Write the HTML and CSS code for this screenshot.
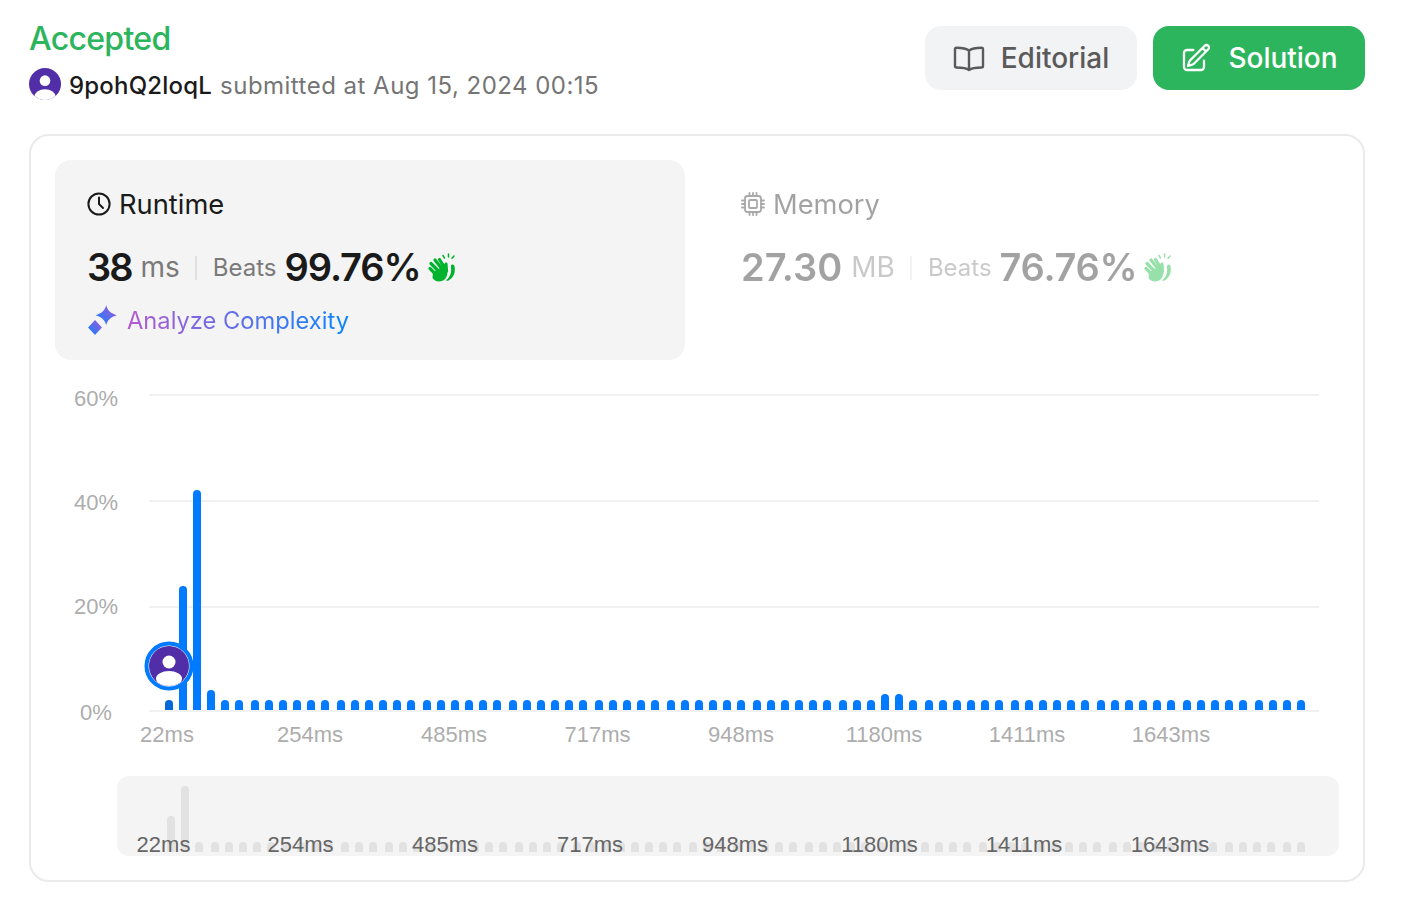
FILE: index.html
```html
<!DOCTYPE html>
<html lang="en">
<head>
<meta charset="utf-8">
<title>Submission</title>
<link rel="stylesheet" href="styles.css">
</head>
<body>
<svg class="defs" width="0" height="0" aria-hidden="true">
  <defs>
    <symbol id="clap" viewBox="0 0 30 30">
      <g class="clap-fingers">
        <path d="M3 15.500l6.500 6.500M4 10.500l8.500 8.500M8 7l7.500 9.500M12.500 6.500l5 8M19 11l.5 7"/>
      </g>
      <path class="clap-fill" d="M6 19l11-6 3.500 5c.2 6.500-3.500 10.500-8.500 10.500-3 0-5-1.500-6.500-3.500z"/>
      <path class="clap-fill" d="M25.500 11.500c1.500 0 2 1 2.200 2.500.6 5.500-.8 10.500-6.200 13.500-1 .5-2.500.3-2.500-.2 4.500-3.500 5.500-7.500 5-12.500-.1-1.500-.2-3.300 1.500-3.300z"/>
      <g class="clap-ticks">
        <path d="M17.500 5 16 2.500"/><path d="M21.500 4V1"/><path d="M25 5.300l2-2.300"/>
      </g>
    </symbol>
    <linearGradient id="spark" x1="0" y1="1" x2="1" y2="0">
      <stop offset="0" stop-color="#0a84ff"/>
      <stop offset="1" stop-color="#a855d8"/>
    </linearGradient>
    <clipPath id="main-clip"><rect x="149" y="380" width="1170" height="330"/></clipPath>
    <clipPath id="mini-clip"><rect x="117" y="776" width="1222" height="76"/></clipPath>
    <clipPath id="avatar-clip"><circle cx="12" cy="12" r="12"/></clipPath>
  </defs>
</svg>
<main class="page">
  <header class="top">
    <div class="status">
      <h1 class="accepted">Accepted</h1>
      <div class="byline">
        <svg class="avatar" viewBox="0 0 24 24"><g clip-path="url(#avatar-clip)"><rect class="av-bg" width="24" height="24"/><circle class="av-fg" cx="12" cy="9.500" r="4"/><ellipse class="av-fg" cx="12" cy="21.500" rx="8" ry="5.500"/></g></svg>
        <span class="user">9pohQ2loqL</span>
        <span class="when">submitted at Aug 15, 2024 00:15</span>
      </div>
    </div>
    <div class="actions">
      <button class="btn btn-grey">
        <svg class="btn-icon" viewBox="0 0 32 32"><path d="M16 8.500C13.500 6.500 9.500 5.700 3.500 5.700c-1 0-1.500.5-1.500 1.400v17c0 .9.500 1.400 1.500 1.400 6 0 10 .6 12.500 2.500 2.500-1.900 6.500-2.500 12.500-2.500 1 0 1.500-.5 1.500-1.400v-17c0-.9-.5-1.400-1.500-1.400-6 0-10 .8-12.500 2.800zm0 0v19.500"/></svg>
        <span>Editorial</span>
      </button>
      <button class="btn btn-green">
        <svg class="btn-icon" viewBox="0 0 24 24"><path d="M16.862 4.487l1.687-1.688a1.875 1.875 0 112.652 2.652L10.582 16.070a4.500 4.500 0 01-1.897 1.130L6 18l.8-2.685a4.500 4.500 0 011.130-1.897l8.932-8.931zm0 0L19.500 7.125M18 14v4.750A2.250 2.250 0 0115.750 21H5.250A2.250 2.250 0 013 18.750V8.250A2.250 2.250 0 015.250 6H10"/></svg>
        <span>Solution</span>
      </button>
    </div>
  </header>

  <section class="card">
    <div class="panels">
      <div class="panel panel-on">
        <div class="panel-title">
          <svg class="title-icon" viewBox="0 0 24 24"><circle cx="12" cy="12" r="10.600"/><path d="M12 5.500V12l4 4"/></svg>
          <span>Runtime</span>
        </div>
        <div class="metric">
          <span class="num num-tight">38</span><span class="unit">ms</span>
          <span class="sep"></span>
          <span class="beats">Beats</span><span class="pct pct-tight">99.76%</span>
          <svg class="clap"><use href="#clap"/></svg>
        </div>
        <div class="analyze">
          <svg class="spark" viewBox="0 0 30 28"><path d="M18 0c1 5 4.500 8 10 9.500-5.500 1.500-9 4.500-10 9.500-1-5-4.500-8-10-9.500C13.500 8 17 5 18 0z"/><path d="M7.500 14l6.500 7-6.500 7-6.500-7z"/></svg>
          <span class="analyze-text">Analyze Complexity</span>
        </div>
      </div>
      <div class="panel panel-off">
        <div class="panel-title">
          <svg class="title-icon chip" viewBox="0 0 24 24"><rect x="4" y="4" width="16" height="16" rx="2.500"/><rect x="8" y="8" width="8" height="8" rx="1"/><path d="M8.500 1v3M12 1v3M15.500 1v3M8.500 20v3M12 20v3M15.500 20v3M1 8.500h3M1 12h3M1 15.500h3M20 8.500h3M20 12h3M20 15.500h3"/></svg>
          <span>Memory</span>
        </div>
        <div class="metric">
          <span class="num">27.30</span><span class="unit">MB</span>
          <span class="sep"></span>
          <span class="beats">Beats</span><span class="pct">76.76%</span>
          <svg class="clap"><use href="#clap"/></svg>
        </div>
      </div>
    </div>

    <svg class="chart" viewBox="55 360 1284 496" width="1284" height="496">
      <g class="grid">
        <line x1="149" x2="1319" y1="395" y2="395"/>
        <line x1="149" x2="1319" y1="501" y2="501"/>
        <line x1="149" x2="1319" y1="607" y2="607"/>
        <line x1="149" x2="1319" y1="711" y2="711"/>
      </g>
      <g class="ylabels">
        <text x="96" y="406">60%</text>
        <text x="96" y="510">40%</text>
        <text x="96" y="614">20%</text>
        <text x="96" y="720">0%</text>
      </g>
      <g class="bars" clip-path="url(#main-clip)">
        <rect class="dark" x="165" y="700"/><rect class="tall" x="179" y="586"/><rect class="tall" x="193" y="490"/><rect class="mid" x="207" y="690"/>
        <rect x="221" y="700"/><rect x="235" y="700"/><rect x="251" y="700"/><rect x="265" y="700"/><rect x="279" y="700"/><rect x="293" y="700"/><rect x="307" y="700"/><rect x="321" y="700"/>
        <rect x="337" y="700"/><rect x="351" y="700"/><rect x="365" y="700"/><rect x="379" y="700"/><rect x="393" y="700"/><rect x="407" y="700"/>
        <rect x="423" y="700"/><rect x="437" y="700"/><rect x="451" y="700"/><rect x="465" y="700"/><rect x="479" y="700"/><rect x="493" y="700"/>
        <rect x="509" y="700"/><rect x="523" y="700"/><rect x="537" y="700"/><rect x="551" y="700"/><rect x="565" y="700"/><rect x="579" y="700"/>
        <rect x="595" y="700"/><rect x="609" y="700"/><rect x="623" y="700"/><rect x="637" y="700"/><rect x="651" y="700"/>
        <rect x="667" y="700"/><rect x="681" y="700"/><rect x="695" y="700"/><rect x="709" y="700"/><rect x="723" y="700"/><rect x="737" y="700"/>
        <rect x="753" y="700"/><rect x="767" y="700"/><rect x="781" y="700"/><rect x="795" y="700"/><rect x="809" y="700"/><rect x="823" y="700"/>
        <rect x="839" y="700"/><rect x="853" y="700"/><rect x="867" y="700"/><rect class="mid" x="881" y="694"/><rect class="mid" x="895" y="694"/><rect x="909" y="700"/>
        <rect x="925" y="700"/><rect x="939" y="700"/><rect x="953" y="700"/><rect x="967" y="700"/><rect x="981" y="700"/><rect x="995" y="700"/>
        <rect x="1011" y="700"/><rect x="1025" y="700"/><rect x="1039" y="700"/><rect x="1053" y="700"/><rect x="1067" y="700"/><rect x="1081" y="700"/>
        <rect x="1097" y="700"/><rect x="1111" y="700"/><rect x="1125" y="700"/><rect x="1139" y="700"/><rect x="1153" y="700"/><rect x="1167" y="700"/>
        <rect x="1183" y="700"/><rect x="1197" y="700"/><rect x="1211" y="700"/><rect x="1225" y="700"/><rect x="1239" y="700"/>
        <rect x="1255" y="700"/><rect x="1269" y="700"/><rect x="1283" y="700"/><rect x="1297" y="700"/>
      </g>
      <g class="marker">
        <circle class="ring" cx="169" cy="666" r="22.500"/>
        <circle class="ring-bg" cx="169" cy="666" r="20"/>
        <circle class="av-fg" cx="169" cy="662" r="6.500"/>
        <ellipse class="av-fg" cx="169" cy="678.500" rx="13" ry="7.500"/>
      </g>
      <g class="xlabels">
        <text x="167" y="742">22ms</text>
        <text x="310" y="742">254ms</text>
        <text x="454" y="742">485ms</text>
        <text x="597.500" y="742">717ms</text>
        <text x="741" y="742">948ms</text>
        <text x="884" y="742">1180ms</text>
        <text x="1027" y="742">1411ms</text>
        <text x="1171" y="742">1643ms</text>
      </g>
      <rect class="mini-bg" x="117" y="776" width="1222" height="80" rx="12"/>
      <g class="mini" clip-path="url(#mini-clip)">
        <rect class="tall" x="167" y="816"/><rect class="tall" x="181" y="786"/><rect x="195" y="842"/><rect x="211" y="842"/><rect x="225" y="842"/><rect x="239" y="842"/><rect x="253" y="842"/>
        <rect x="267" y="842"/><rect x="281" y="842"/><rect x="297" y="842"/><rect x="311" y="842"/><rect x="325" y="842"/><rect x="341" y="842"/><rect x="355" y="842"/><rect x="369" y="842"/><rect x="385" y="842"/><rect x="399" y="842"/>
        <rect x="413" y="842"/><rect x="427" y="842"/><rect x="441" y="842"/><rect x="457" y="842"/><rect x="471" y="842"/><rect x="485" y="842"/><rect x="499" y="842"/><rect x="515" y="842"/><rect x="529" y="842"/><rect x="543" y="842"/>
        <rect x="557" y="842"/><rect x="573" y="842"/><rect x="587" y="842"/><rect x="601" y="842"/><rect x="617" y="842"/><rect x="631" y="842"/><rect x="645" y="842"/><rect x="659" y="842"/><rect x="673" y="842"/><rect x="689" y="842"/>
        <rect x="703" y="842"/><rect x="717" y="842"/><rect x="733" y="842"/><rect x="747" y="842"/><rect x="761" y="842"/><rect x="775" y="842"/><rect x="789" y="842"/><rect x="805" y="842"/><rect x="819" y="842"/><rect x="833" y="842"/>
        <rect x="847" y="842"/><rect x="861" y="842"/><rect x="877" y="842"/><rect x="891" y="842"/><rect x="905" y="842"/><rect x="921" y="842"/><rect x="935" y="842"/><rect x="949" y="842"/><rect x="963" y="842"/><rect x="979" y="842"/>
        <rect x="993" y="842"/><rect x="1007" y="842"/><rect x="1021" y="842"/><rect x="1037" y="842"/><rect x="1051" y="842"/><rect x="1065" y="842"/><rect x="1079" y="842"/><rect x="1093" y="842"/><rect x="1109" y="842"/><rect x="1123" y="842"/>
        <rect x="1137" y="842"/><rect x="1153" y="842"/><rect x="1167" y="842"/><rect x="1181" y="842"/><rect x="1195" y="842"/><rect x="1209" y="842"/><rect x="1225" y="842"/><rect x="1239" y="842"/><rect x="1253" y="842"/><rect x="1267" y="842"/><rect x="1283" y="842"/><rect x="1297" y="842"/>
      </g>
      <g class="minilabels">
        <text x="163.500" y="852">22ms</text>
        <text x="300.500" y="852">254ms</text>
        <text x="445" y="852">485ms</text>
        <text x="590" y="852">717ms</text>
        <text x="735" y="852">948ms</text>
        <text x="879.500" y="852">1180ms</text>
        <text x="1024" y="852">1411ms</text>
        <text x="1170" y="852">1643ms</text>
      </g>
    </svg>
  </section>
</main>
</body>
</html>
```

FILE: styles.css
```css
* { box-sizing: border-box; }
html, body { margin: 0; background: #fff; }
body { font-family: Inter, "Liberation Sans", sans-serif; color: #1a1a1a; }
.defs { position: absolute; }

.page { width: 1410px; padding: 0 45px 0 29px; }

.top { display: flex; justify-content: space-between; align-items: flex-start; height: 134px; }
.status { display: flex; flex-direction: column; padding-top: 20px; }
.accepted { margin: 0; font-size: 32px; line-height: 38px; font-weight: 500; letter-spacing: -0.7px; color: #2db55d; }
.byline { display: flex; align-items: center; gap: 8px; margin-top: 9px; height: 36px; font-size: 24px; }
.avatar { width: 32px; height: 32px; margin-top: -2px; }
.av-bg { fill: #512da8; }
.av-fg { fill: #fff; }
.user { font-weight: 500; letter-spacing: 0.2px; color: #1a1a1a; }
.when { color: #757575; letter-spacing: 0.48px; }

.actions { display: flex; gap: 16px; padding-top: 26px; }
.btn { display: flex; align-items: center; justify-content: center; gap: 16px; width: 212px; height: 64px; border: 0; border-radius: 16px; padding: 0; font: 500 28px Inter, sans-serif; }
.btn-icon { width: 32px; height: 32px; fill: none; stroke: currentColor; stroke-linecap: round; stroke-linejoin: round; }
.btn-grey { background: #f2f3f5; color: #5a5a5a; }
.btn-grey .btn-icon { stroke-width: 2.400; }
.btn-green { background: #2db55d; color: #fff; }
.btn-green .btn-icon { stroke-width: 1.700; }

.card { width: 1336px; height: 748px; border: 2px solid #eaeaea; border-radius: 20px; padding: 24px; }
.panels { display: flex; gap: 24px; height: 200px; }
.panel { flex: 1; padding: 26px 32px 0; border-radius: 16px; }
.panel-on { background: #f4f4f4; }
.panel-off { opacity: 0.4; }
.panel-title { display: flex; align-items: center; gap: 8px; height: 36px; font-size: 27.300px; }
.title-icon { width: 24px; height: 24px; fill: none; stroke: #1a1a1a; stroke-width: 2; stroke-linecap: round; stroke-linejoin: round; }
.chip { stroke: #2a2a2a; stroke-width: 1.800; }

.metric { display: flex; align-items: center; margin-top: 21px; height: 48px; }
.num { font-size: 38px; font-weight: 600; }
.num-tight { letter-spacing: -2px; }
.unit { margin-left: 9px; font-size: 28px; color: #7a7a7a; }
.sep { width: 2px; height: 24px; margin: 2px 16px 0 15px; background: #e0e0e0; }
.beats { font-size: 24px; color: #7a7a7a; }
.pct { margin-left: 8px; font-size: 38px; font-weight: 600; letter-spacing: -0.300px; }
.pct-tight { letter-spacing: -1.100px; }
.clap { width: 30px; height: 30px; margin-left: 6px; margin-top: 2px; }
.clap-fill { fill: #00b32e; }
.clap-fingers { fill: none; stroke: #00b32e; stroke-width: 3.200; stroke-linecap: round; }
.clap-ticks { fill: none; stroke: #00b32e; stroke-width: 1.500; stroke-linecap: round; }

.analyze { display: flex; align-items: center; gap: 8px; margin-top: 11px; height: 36px; }
.spark { width: 32px; height: 30px; fill: url(#spark); }
.analyze-text { font-size: 23.700px; background: linear-gradient(90deg, #b45ad0 0%, #0a84ff 100%); -webkit-background-clip: text; background-clip: text; color: transparent; }

.chart { display: block; font-family: "Liberation Sans", Arial, sans-serif; font-size: 22px; }
.grid line { stroke: #ececec; stroke-width: 1.500; }
.ylabels text, .xlabels text, .minilabels text { text-anchor: middle; }
.ylabels text, .xlabels text { fill: #adadad; }
.minilabels text { fill: #666; }
.bars rect { width: 8px; height: 30px; rx: 4px; fill: #007aff; }
.bars .tall { height: 240px; }
.bars .dark { fill: #0068d9; }
.mini rect { width: 8px; height: 30px; rx: 4px; fill: #e2e2e2; }
.mini .tall { height: 80px; }
.mini-bg { fill: #f4f4f4; }
.ring { fill: #fff; stroke: #007aff; stroke-width: 4; }
.ring-bg { fill: #512da8; }
```
